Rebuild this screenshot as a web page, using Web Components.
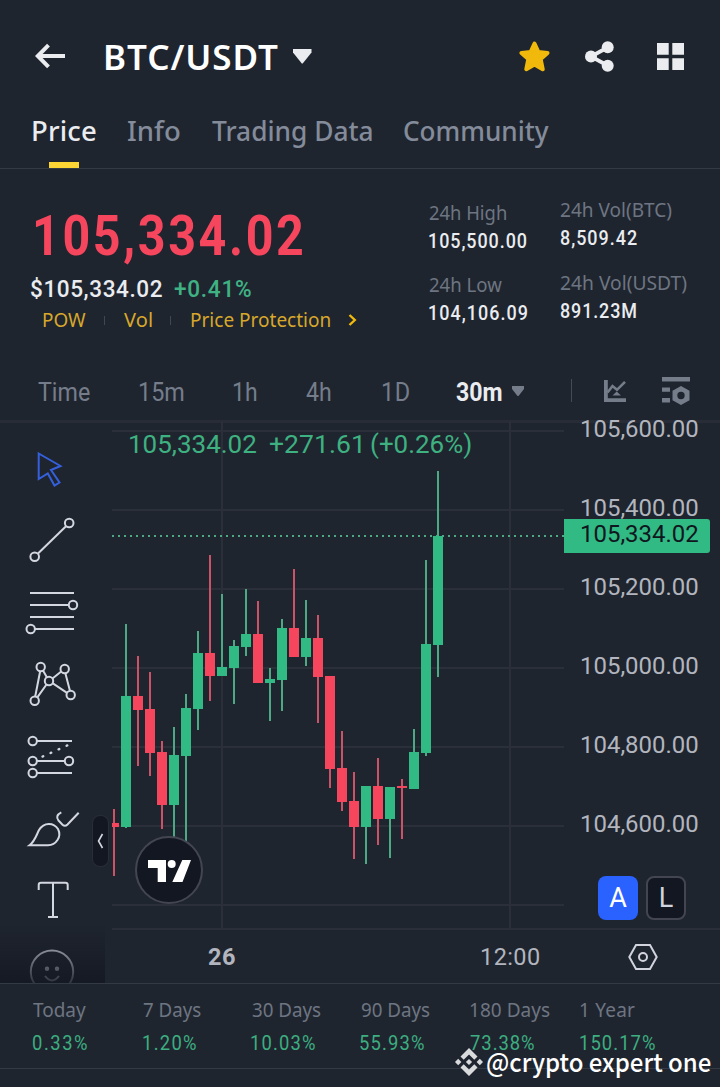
<!DOCTYPE html>
<html lang="en">
<head>
<meta charset="utf-8">
<title>BTC/USDT</title>
<style>
    html, body {
        margin: 0;
        background: #1f252f;
    }
    body {
        width: 720px;
        height: 1087px;
        overflow: hidden;
        font-family: Roboto, "Liberation Sans", sans-serif;
        color: #eaecef;
    }
</style>
</head>
<body>
<trade-page></trade-page>

<script>
// One line of text whose visible ink is fitted to the width given in "w".
// "squeeze" narrows the glyphs first, letter spacing takes up the rest.
const pen = document.createElement('canvas').getContext('2d');

class FitLabel extends HTMLElement {
    constructor() {
        super();
        this.attachShadow({mode: 'open'});
        this.shadowRoot.innerHTML = `
            <style>
                :host { display: flex; flex: none; }
                span { flex: none; white-space: pre; transform-origin: 0 50%; }
            </style>
            <span><slot></slot></span>`;
    }

    connectedCallback() {
        const text = this.textContent;
        const width = Number(this.getAttribute('w'));
        const style = getComputedStyle(this);
        pen.font = `${style.fontWeight} ${style.fontSize} ${style.fontFamily}`;
        const box = pen.measureText(text);
        const ink = box.actualBoundingBoxLeft + box.actualBoundingBoxRight;
        let scale = Number(this.getAttribute('squeeze')) || 1;
        if (ink * scale > width) {
            scale = width / ink;
        }
        const gap = text.length > 1 ? (width / scale - ink) / (text.length - 1) : 0;
        const span = this.shadowRoot.querySelector('span');
        this.style.width = width + 'px';
        span.style.letterSpacing = gap + 'px';
        span.style.marginLeft = box.actualBoundingBoxLeft * scale + 'px';
        span.style.transform = `scaleX(${scale})`;
    }
}

class TradeHeader extends HTMLElement {
    constructor() {
        super();
        this.attachShadow({mode: 'open'});
        this.shadowRoot.innerHTML = `
            <style>
                :host { display: flex; align-items: center; height: 112px; padding: 0 36px 0 35px; }
                svg { flex: none; display: block; }
                fit-label { font: 600 35px/40px "Noto Sans", sans-serif; color: #fff; margin: 2px 15px 0 41px; }
                .star { margin-left: auto; }
                .share { margin: 0 43px 0 35px; }
            </style>
            <svg width="30" height="26" viewBox="0 0 30 26" fill="none" stroke="#eaecef" stroke-width="4">
                <path d="M3 13H30M13.5 2.2 2.8 13 13.5 23.8"/>
            </svg>
            <fit-label w="172">BTC/USDT</fit-label>
            <svg width="19" height="15" viewBox="0 0 19 15"><path fill="#eaecef" d="M0 0H18.500V3.500L9.700 14.500H8.800L0 3.500Z"/></svg>
            <svg class="star" width="31" height="31" viewBox="0 0 31 31">
                <path d="M15.500 2.500 19.300 10.900 28.500 11.900 21.700 18.100 23.700 28.200 15.500 23.500 7.300 28.200 9.300 18.100 2.500 11.900 11.700 10.900Z"
                    fill="#f0b90b" stroke="#f0b90b" stroke-width="4" stroke-linejoin="round"/>
            </svg>
            <svg class="share" width="29" height="31" viewBox="0 0 29 31" fill="#eaecef">
                <path d="M22.500 6.500 6 15.500 22.500 24.500" fill="none" stroke="#eaecef" stroke-width="3.800"/>
                <circle cx="22.700" cy="6.300" r="6"/><circle cx="6" cy="15.500" r="6"/><circle cx="22.700" cy="24.700" r="6"/>
            </svg>
            <svg width="27" height="27" viewBox="0 0 27 27" fill="#eaecef">
                <path d="M0 0H11.700V11.700H0ZM15.300 0H27V11.700H15.300ZM0 15.300H11.700V27H0ZM15.300 15.300H27V27H15.300Z"/>
            </svg>`;
    }
}

class TradeTabs extends HTMLElement {
    constructor() {
        super();
        this.attachShadow({mode: 'open'});
        this.shadowRoot.innerHTML = `
            <style>
                :host {
                    display: flex; gap: 32px; height: 56px; padding-left: 33px;
                    border-bottom: 1px solid #343a43; color: #848b9a;
                    font: 500 27.500px/38px "Noto Sans", sans-serif;
                }
                .tab { display: flex; flex-direction: column; justify-content: space-between; align-items: center; }
                .active { color: #eaecef; }
                .active::after { content: ''; width: 30px; height: 6px; margin-right: 2px; background: #fcd535; }
            </style>
            <div class="tab active"><fit-label w="63">Price</fit-label></div>
            <div class="tab"><fit-label w="52">Info</fit-label></div>
            <div class="tab"><fit-label w="160">Trading Data</fit-label></div>
            <div class="tab"><fit-label w="145">Community</fit-label></div>`;
    }
}

class PriceSummary extends HTMLElement {
    constructor() {
        super();
        this.attachShadow({mode: 'open'});
        this.shadowRoot.innerHTML = `
            <style>
                :host { display: flex; height: 192px; }
                .main { width: 429px; }
                .last { font: 700 55px/60px Roboto, sans-serif; color: #f6465d; margin: 37px 0 0 36px; }
                .fiat { display: flex; gap: 12px; margin: 9px 0 0 31px; font: 500 24px/28px Roboto, sans-serif; }
                .up { color: #3fb283; }
                .tags { display: flex; align-items: center; margin: 4px 0 0 43px; font: 400 20px/26px "Noto Sans", sans-serif; color: #d8a82b; }
                i { width: 1px; height: 9px; margin: 0 19px 0 18px; background: #414751; }
                svg { margin-left: 18px; }
                .stats { display: grid; grid-template-columns: 99px 130px; column-gap: 32px; align-content: start; padding-top: 28px; }
                .stats div { height: 72.500px; }
                .stats div:nth-child(odd) { padding-top: 2.500px; height: 70px; }
                .name { font: 400 20px/26px "Noto Sans", sans-serif; color: #6e7582; }
                .value { font: 500 19.500px/24px Roboto, sans-serif; margin-top: 4px; }
            </style>
            <div class="main">
                <fit-label class="last" w="267" squeeze=".88">105,334.02</fit-label>
                <div class="fiat">
                    <fit-label w="131" squeeze=".94">$105,334.02</fit-label>
                    <fit-label class="up" w="77" squeeze=".94">+0.41%</fit-label>
                </div>
                <div class="tags">
                    <fit-label w="43">POW</fit-label><i></i>
                    <fit-label w="28">Vol</fit-label><i></i>
                    <fit-label w="139" style="margin-left:1px">Price Protection</fit-label>
                    <svg width="9" height="12" viewBox="0 0 9 12" fill="none" stroke="#f0b90b" stroke-width="2.400"><path d="M1.500 1 6.800 6 1.500 11"/></svg>
                </div>
            </div>
            <div class="stats">
                <div><fit-label class="name" w="77">24h High</fit-label><fit-label class="value" w="98" squeeze=".92">105,500.00</fit-label></div>
                <div><fit-label class="name" w="112">24h Vol(BTC)</fit-label><fit-label class="value" w="77" squeeze=".92">8,509.42</fit-label></div>
                <div><fit-label class="name" w="73">24h Low</fit-label><fit-label class="value" w="98" squeeze=".92">104,106.09</fit-label></div>
                <div><fit-label class="name" w="127">24h Vol(USDT)</fit-label><fit-label class="value" w="76" squeeze=".92">891.23M</fit-label></div>
            </div>`;
    }
}

class IntervalBar extends HTMLElement {
    constructor() {
        super();
        this.attachShadow({mode: 'open'});
        this.shadowRoot.innerHTML = `
            <style>
                :host {
                    display: flex; align-items: center; height: 59px; padding: 0 30px 0 38px;
                    border-bottom: 3px solid #272c36; color: #757d8b;
                    font: 400 25px/30px Roboto, sans-serif;
                }
                fit-label { margin: 4px 50px 0 0; }
                .active { font-weight: 700; color: #eaecef; margin-right: 10px; }
                .rule { width: 1px; height: 23px; margin-left: 47px; background: #454b56; }
                .chart { margin: 0 36px 0 32px; }
            </style>
            <fit-label w="52" squeeze=".94">Time</fit-label>
            <fit-label w="44" squeeze=".94">15m</fit-label>
            <fit-label w="23" squeeze=".94" style="margin-right:49px">1h</fit-label>
            <fit-label w="25" squeeze=".94" style="margin-right:52px">4h</fit-label>
            <fit-label w="26" squeeze=".94" style="margin-right:47px">1D</fit-label>
            <fit-label class="active" w="46" squeeze=".94">30m</fit-label>
            <svg width="12" height="10" viewBox="0 0 12 10"><path fill="#757d8b" d="M0 0H12V3L6.500 10H5.500L0 3Z"/></svg>
            <div class="rule"></div>
            <svg class="chart" width="22" height="22" viewBox="0 0 22 22">
                <path fill="#757d8b" d="M0 0H3.800V18.200H22V22H0ZM8.500 15.500 12.700 11.500 17 15.500Z"/>
                <path fill="none" stroke="#757d8b" stroke-width="2.600" d="M3.500 12.500 8.500 6 13 9.800 21 1.800"/>
            </svg>
            <svg width="28" height="28" viewBox="0 0 28 28" fill="#757d8b">
                <path d="M0 0H28V4.600H0ZM0 10.600H8V14.800H0ZM0 21H8V25.600H0Z"/>
                <path fill-rule="evenodd" d="M19 9 27.500 13.800V23.200L19 28 10.500 23.200V13.800ZM19 14.800A3.700 3.700 0 1 0 19 22.200 3.700 3.700 0 1 0 19 14.800Z"/>
            </svg>`;
    }
}

class DrawTools extends HTMLElement {
    constructor() {
        super();
        this.attachShadow({mode: 'open'});
        const icons = [
            '<path stroke="#3560dd" stroke-width="2" d="M22.700 20.500 44.500 33 35 37 43.500 49.500 38.500 52.500 31.800 40.500 22.700 46Z"/>',
            '<path d="M22 48.500 50 21.200"/><circle cx="18.700" cy="51.700" r="4.300"/><circle cx="53.200" cy="18" r="4.300"/>',
            '<path d="M14 16H58M14 28H53M14 40H58M19 52H58"/><circle cx="57" cy="28" r="4.200"/><circle cx="14.700" cy="52" r="4.200"/>',
            '<path d="M24.200 22 19.200 47.500M27 21.500 31 28.500M30.500 35.500 21.500 48.200M36.500 29.500 45.200 22.500M49.300 24 54 42M36.500 34.200 51 43.800"/>' +
                '<circle cx="24.700" cy="18" r="4.200"/><circle cx="48.700" cy="20" r="4.200"/><circle cx="33" cy="32" r="4.200"/><circle cx="54.700" cy="46" r="4.200"/><circle cx="18.700" cy="51.700" r="4.200"/>',
            '<path d="M21 20H56M21 40H49M21 52H56"/><path stroke-width="2.400" stroke-linecap="round" stroke-dasharray=".8 8" d="M26.500 35.600 52 24.100"/>' +
                '<circle cx="16.700" cy="20" r="4.200"/><circle cx="16.700" cy="40" r="4.200"/><circle cx="53" cy="40" r="4.200"/><circle cx="16.700" cy="52" r="4.200"/>',
            '<path d="M13.500 52.300C19 48 20 43 23 37C28 28.500 38 29.500 42 36C46 44 40 52 32 52.300Z"/><path d="M45.300 19.300C41 21.500 40 24.500 42.500 27.500L46.500 31.700Q49 34 51.500 31.500L62.700 19.700"/>',
            '<path d="M22.700 25V20Q22.700 17.700 25 17.700H49.500Q51.700 17.700 51.700 20V25M37 17.700V52M32 52H42"/>',
            '<circle cx="36" cy="34.700" r="21.200"/><path d="M29 39Q36 48 43 39"/><circle cx="31" cy="31.700" r="1.200"/><circle cx="41" cy="31.700" r="1.200"/>'
        ];
        this.shadowRoot.innerHTML = `
            <style>
                :host { display: block; position: relative; width: 112px; padding-top: 10px; box-sizing: border-box; overflow: hidden; }
                svg { display: block; margin-left: 16px; }
                .shade {
                    position: absolute; left: 0; bottom: 0; width: 105px; height: 60px;
                    background: linear-gradient(rgba(19, 23, 34, 0), rgba(19, 23, 34, .85));
                }
                .fold {
                    position: absolute; left: 93px; top: 393px; width: 15px; height: 50px;
                    display: flex; align-items: center; justify-content: center;
                    border-radius: 7px; background: #131722; box-shadow: 0 0 0 1px #282d37;
                }
                .fold svg { margin: 0; }
            </style>
            ${icons.map(icon => `<svg width="72" height="72" viewBox="0 0 72 72" fill="none" stroke="#d3d7df" stroke-width="2">${icon}</svg>`).join('')}
            <div class="shade"></div>
            <div class="fold"><svg width="7" height="16" viewBox="0 0 7 16" fill="none" stroke="#d3d7df" stroke-width="1.600"><path d="M5.500 1 1.500 8 5.500 15"/></svg></div>`;
    }
}

// up, high, body top, body bottom, low
const candles = [
    [0, 809, 823, 827, 876], [1, 624, 696, 827, 828], [0, 656, 696, 710, 766], [0, 672, 709, 753, 776],
    [0, 741, 752, 805, 829], [1, 727, 755, 805, 842], [1, 694, 708, 756, 842], [1, 631, 653, 709, 730],
    [0, 555, 653, 676, 701], [1, 594, 667, 676, 676], [1, 640, 646, 668, 704], [1, 589, 634, 647, 656],
    [0, 601, 634, 683, 683], [1, 668, 679, 683, 721], [1, 619, 628, 680, 711], [0, 569, 628, 657, 657],
    [1, 600, 638, 657, 666], [0, 615, 638, 677, 723], [0, 676, 676, 769, 788], [0, 731, 768, 802, 811],
    [0, 772, 801, 827, 859], [1, 786, 786, 827, 864], [0, 758, 786, 819, 845], [1, 787, 787, 819, 858],
    [0, 779, 786, 788, 839], [1, 729, 752, 789, 789], [1, 560, 644, 753, 756], [1, 471, 536, 645, 677]
];

class CandleChart extends HTMLElement {
    constructor() {
        super();
        this.attachShadow({mode: 'open'});
        const rows = [431, 510, 589, 668, 747, 826, 905];
        const sticks = candles.map(([up, high, top, bottom, low], i) => {
            const x = 114 + i * 12;
            return `<rect x="${x - 1}" y="${high}" width="2" height="${low - high}" fill="${up ? '#4da884' : '#cb5367'}"/>
                <rect x="${x - 5}" y="${top}" width="10" height="${bottom - top}" fill="${up ? '#31ba84' : '#f6465d'}"/>`;
        }).join('');
        this.shadowRoot.innerHTML = `
            <style>
                :host { display: grid; position: relative; grid-template-rows: 505px 55px; width: 452px; }
                .grid { display: block; margin-top: -2px; }
                .legend { position: absolute; left: 18px; top: 6px; display: flex; font: 400 26.500px/30px Roboto, sans-serif; color: #3eb181; }
                .logo { position: absolute; left: 23px; top: 413px; }
                .axis {
                    display: flex; align-items: center; padding-left: 96px; border-top: 2px solid #292e38;
                    font: 400 23.500px/30px Roboto, sans-serif; color: #b2b5be;
                }
                .day { font-weight: 700; margin-right: 246px; }
            </style>
            <svg class="grid" width="452" height="507" viewBox="112 421 452 507">
                <g fill="#2a2f39">
                    ${rows.map(y => `<rect x="112" y="${y - 1}" width="452" height="2"/>`).join('')}
                    <rect x="221" y="421" width="2" height="507"/><rect x="509" y="421" width="2" height="507"/>
                </g>
                <path d="M112 536H564" stroke="#4da884" stroke-width="2" stroke-dasharray="2 4"/>
                ${sticks}
            </svg>
            <div class="legend">
                <fit-label w="126">105,334.02</fit-label>
                <fit-label w="91" style="margin:0 10px 0 14px">+271.61</fit-label>
                <fit-label w="100">(+0.26%)</fit-label>
            </div>
            <svg class="logo" width="68" height="68" viewBox="0 0 68 68">
                <circle cx="34" cy="34" r="33" fill="#131722" stroke="#434651" stroke-width="2"/>
                <path fill="#fff" d="M13 24H31V46H22.700V32H13ZM47.300 24H56L47.500 46H37.300Z"/><circle cx="36.700" cy="28" r="4" fill="#fff"/>
            </svg>
            <div class="axis">
                <fit-label class="day" w="27">26</fit-label>
                <fit-label w="58">12:00</fit-label>
            </div>`;
    }
}

class PriceScale extends HTMLElement {
    constructor() {
        super();
        this.attachShadow({mode: 'open'});
        const prices = ['105,600.00', '105,400.00', '105,200.00', '105,000.00', '104,800.00', '104,600.00'];
        this.shadowRoot.innerHTML = `
            <style>
                :host {
                    display: grid; position: relative; grid-template-rows: 505px 55px; flex: 1;
                    font: 400 24.500px/30px Roboto, sans-serif; color: #b2b5be;
                }
                .prices { display: flex; flex-direction: column; gap: 49px; margin-top: -9px; padding-left: 18px; position: relative; }
                .tag {
                    position: absolute; left: 0; top: 96px; width: 146px; height: 34px; box-sizing: border-box;
                    padding-left: 18px; border-radius: 0 3px 3px 0; background: #31ba84; color: #10161e;
                }
                .modes { position: absolute; left: 34px; top: 453px; display: flex; gap: 8px; }
                .modes div {
                    display: flex; justify-content: center; align-items: center; box-sizing: border-box;
                    width: 40px; height: 44px; border-radius: 8px; font-size: 27px; color: #fff; background: #2962ff;
                }
                .modes .log { border: 2px solid #434651; background: #131722; color: #d1d4dc; }
                .corner { display: flex; align-items: center; padding-left: 63px; border-top: 2px solid #292e38; }
            </style>
            <div class="prices">${prices.map(price => `<fit-label w="116">${price}</fit-label>`).join('')}</div>
            <div class="tag"><fit-label w="116">105,334.02</fit-label></div>
            <div class="modes"><div>A</div><div class="log">L</div></div>
            <div class="corner">
                <svg width="32" height="28" viewBox="0 0 32 28" fill="none" stroke="#d1d4dc" stroke-width="2">
                    <path d="M9 2H23L29.700 14 23 26H9L2.300 14Z"/><circle cx="16" cy="14" r="4"/>
                </svg>
            </div>`;
    }
}

class PeriodReturns extends HTMLElement {
    constructor() {
        super();
        this.attachShadow({mode: 'open'});
        const periods = [
            ['Today', 53, '0.33%', 54], ['7 Days', 58, '1.20%', 53], ['30 Days', 69, '10.03%', 64],
            ['90 Days', 69, '55.93%', 64], ['180 Days', 80, '73.38%', 64], ['1 Year', 55, '150.17%', 75]
        ];
        this.shadowRoot.innerHTML = `
            <style>
                :host {
                    display: grid; grid-template-columns: 110px 108.500px 109px 109.500px 110px 1fr; height: 84px;
                    padding-left: 32.500px; border-top: 1px solid #343a43; border-bottom: 1px solid #343a43;
                }
                .name { font: 400 19px/26px "Noto Sans", sans-serif; color: #6e7582; margin: 13px 0 0 .5px; }
                .rate { font: 400 20px/26px Roboto, sans-serif; color: #3cae80; margin-top: 7px; }
            </style>
            ${periods.map(([name, w, rate, rw]) => `<div>
                <fit-label class="name" w="${w}">${name}</fit-label>
                <fit-label class="rate" w="${rw}" squeeze=".92">${rate}</fit-label>
            </div>`).join('')}`;
    }
}

class AuthorMark extends HTMLElement {
    constructor() {
        super();
        this.attachShadow({mode: 'open'});
        this.shadowRoot.innerHTML = `
            <style>
                :host {
                    display: flex; align-items: center; gap: 4px;
                    font: 500 25.500px/36px "Noto Sans CJK SC", "Noto Sans", sans-serif; color: #fff;
                }
                fit-label { margin-top: -2px; }
            </style>
            <svg width="28" height="28" viewBox="0 0 28 28" fill="#d9dadc">
                <path d="M14 0 22.500 8.500 19.300 11.700 14 6.400 8.700 11.700 5.500 8.500ZM14 28 22.500 19.500 19.300 16.300 14 21.600 8.700 16.300 5.500 19.500ZM14 10.900 17.100 14 14 17.100 10.900 14ZM3.200 10.800 6.400 14 3.200 17.200 0 14ZM24.800 10.800 28 14 24.800 17.200 21.600 14Z"/>
            </svg>
            <fit-label w="224">@crypto expert one</fit-label>`;
    }
}

class TradePage extends HTMLElement {
    constructor() {
        super();
        this.attachShadow({mode: 'open'});
        this.shadowRoot.innerHTML = `
            <style>
                :host { display: block; position: relative; width: 720px; height: 1087px; overflow: hidden; }
                .chart { display: flex; height: 560px; }
                author-mark { position: absolute; left: 455px; top: 1045px; }
            </style>
            <trade-header></trade-header>
            <trade-tabs></trade-tabs>
            <price-summary></price-summary>
            <interval-bar></interval-bar>
            <div class="chart">
                <draw-tools></draw-tools>
                <candle-chart></candle-chart>
                <price-scale></price-scale>
            </div>
            <period-returns></period-returns>
            <author-mark></author-mark>`;
    }
}

window.customElements.define('fit-label', FitLabel);
window.customElements.define('trade-header', TradeHeader);
window.customElements.define('trade-tabs', TradeTabs);
window.customElements.define('price-summary', PriceSummary);
window.customElements.define('interval-bar', IntervalBar);
window.customElements.define('draw-tools', DrawTools);
window.customElements.define('candle-chart', CandleChart);
window.customElements.define('price-scale', PriceScale);
window.customElements.define('period-returns', PeriodReturns);
window.customElements.define('author-mark', AuthorMark);
window.customElements.define('trade-page', TradePage);
</script>
</body>
</html>
